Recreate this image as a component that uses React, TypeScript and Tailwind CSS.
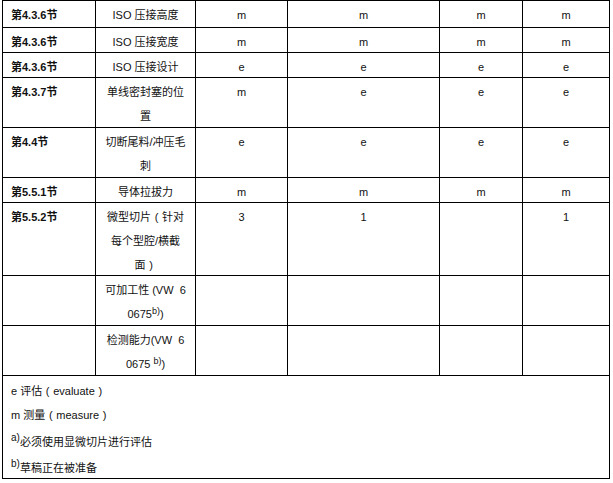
import type { ReactNode } from 'react';

const Paren = ({ c }: { c: string }) => (
  <span className="inline-block w-[11px] text-center">{c}</span>
);

type Row = { h: string; cells: ReactNode[] };

const rows: Row[] = [
  { h: 'h-[27px]', cells: ['第4.3.6节', 'ISO 压接高度', 'm', 'm', 'm', 'm'] },
  { h: 'h-[25px]', cells: ['第4.3.6节', 'ISO 压接宽度', 'm', 'm', 'm', 'm'] },
  { h: 'h-[25px]', cells: ['第4.3.6节', 'ISO 压接设计', 'e', 'e', 'e', 'e'] },
  {
    h: 'h-[50px]',
    cells: [
      '第4.3.7节',
      <>
        单线密封塞的位
        <br />置
      </>,
      'm',
      'e',
      'e',
      'e'
    ]
  },
  {
    h: 'h-[50px]',
    cells: [
      '第4.4节',
      <>
        切断尾料/冲压毛
        <br />刺
      </>,
      'e',
      'e',
      'e',
      'e'
    ]
  },
  { h: 'h-[25px]', cells: ['第5.5.1节', '导体拉拔力', 'm', 'm', 'm', 'm'] },
  {
    h: 'h-[73px]',
    cells: [
      '第5.5.2节',
      <>
        微型切片
        <Paren c="(" />
        针对
        <br />
        每个型腔/横截
        <br />面
        <Paren c=")" />
      </>,
      '3',
      '1',
      '',
      '1'
    ]
  },
  {
    h: 'h-[50px]',
    cells: [
      '',
      <>
        可加工性 (VW{'\u00a0\u00a0'}6
        <br />
        0675<sup className="text-[9px]">b)</sup>)
      </>,
      '',
      '',
      '',
      ''
    ]
  },
  {
    h: 'h-[50px]',
    cells: [
      '',
      <>
        检测能力(VW{'\u00a0\u00a0'}6
        <br />
        0675 <sup className="text-[9px]">b)</sup>)
      </>,
      '',
      '',
      '',
      ''
    ]
  }
];

const widths = ['w-[93px]', 'w-[100px]', 'w-[92px]', 'w-[152px]', 'w-[83px]', 'w-[87px]'];

export default function App() {
  return (
    <div className="min-h-[483px] w-[613px] bg-white pl-[2px] font-['Liberation_Sans','Noto_Sans_CJK_SC',sans-serif] text-[11px] leading-[24px] text-[#111]">
      <div className="w-[608px] border-t border-l border-black">
        {rows.map((row, i) => (
          <div key={i} className={`flex ${row.h}`}>
            {row.cells.map((cell, j) => (
              <div
                key={j}
                className={`${widths[j]} shrink-0 border-r border-b border-black pt-[2px] ${
                  j === 0 ? 'pl-[8px] text-left font-bold' : 'text-center'
                }`}
              >
                {cell}
              </div>
            ))}
          </div>
        ))}
        <div className="h-[103px] border-r border-b border-black pt-[3px] pl-[8px]">
          <div className="h-[24px]">
            e 评估<Paren c="(" />evaluate<Paren c=")" />
          </div>
          <div className="h-[24px]">
            m 测量<Paren c="(" />measure<Paren c=")" />
          </div>
          <div className="mt-[3px] h-[24px]">
            <sup className="text-[10px]">a)</sup>必须使用显微切片进行评估
          </div>
          <div className="mt-[2px] h-[24px]">
            <sup className="text-[10px]">b)</sup>草稿正在被准备
          </div>
        </div>
      </div>
    </div>
  );
}
